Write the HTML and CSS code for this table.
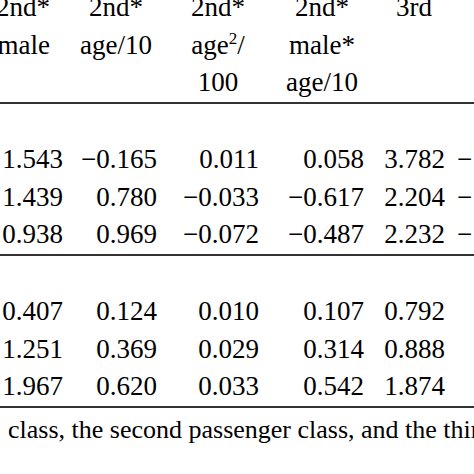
FILE: index.html
```html
<!DOCTYPE html>
<html>
<head>
<meta charset="utf-8">
<link rel="stylesheet" href="styles.css">
</head>
<body>
<div class="page">
<table class="results">
  <colgroup>
    <col class="c1"><col class="c2"><col class="c3"><col class="c4"><col class="c5"><col class="c6">
  </colgroup>
  <thead>
    <tr><th class="h1">2nd*</th><th>2nd*</th><th>2nd*</th><th>2nd*</th><th>3rd</th><th></th></tr>
    <tr><th class="h1">male</th><th>age/10</th><th>age<sup>2</sup>/</th><th>male*</th><th></th><th></th></tr>
    <tr><th class="h1"></th><th></th><th>100</th><th>age/10</th><th></th><th></th></tr>
  </thead>
  <tbody>
    <tr class="gap"><td></td><td></td><td></td><td></td><td></td><td></td></tr>
    <tr><td>1.543</td><td>&minus;0.165</td><td>0.011</td><td>0.058</td><td>3.782</td><td class="cut">&minus;</td></tr>
    <tr><td>1.439</td><td>0.780</td><td>&minus;0.033</td><td>&minus;0.617</td><td>2.204</td><td class="cut">&minus;</td></tr>
    <tr><td>0.938</td><td>0.969</td><td>&minus;0.072</td><td>&minus;0.487</td><td>2.232</td><td class="cut">&minus;</td></tr>
  </tbody>
  <tbody>
    <tr class="gap"><td></td><td></td><td></td><td></td><td></td><td></td></tr>
    <tr><td>0.407</td><td>0.124</td><td>0.010</td><td>0.107</td><td>0.792</td><td class="cut"></td></tr>
    <tr><td>1.251</td><td>0.369</td><td>0.029</td><td>0.314</td><td>0.888</td><td class="cut"></td></tr>
    <tr><td>1.967</td><td>0.620</td><td>0.033</td><td>0.542</td><td>1.874</td><td class="cut"></td></tr>
  </tbody>
</table>
<p class="note">class, the second passenger class, and the third passenger class</p>
</div>
</body>
</html>
```
FILE: styles.css
```css
html, body {
  margin: 0;
  padding: 0;
  background: #fff;
  overflow: hidden;
}
.page {
  width: 474px;
  height: 474px;
  overflow: hidden;
  font-family: "Liberation Serif", Tinos, "Times New Roman", "DejaVu Serif", serif;
  font-size: 27px;
  color: #000;
}
.results {
  border-collapse: collapse;
  table-layout: fixed;
  width: 500px;
  margin: -11px 0 0 -12px;
  border-bottom: 2px solid #333;
  font-family: inherit;
}
.c1 { width: 78px; }
.c2 { width: 100px; }
.c3 { width: 104px; }
.c4 { width: 104px; }
.c5 { width: 80px; }
.c6 { width: 34px; }
.results th,
.results td {
  height: 37.5px;
  padding: 0;
  line-height: 37.5px;
  white-space: nowrap;
  font-weight: normal;
  font-family: inherit;
  vertical-align: top;
}
.results th {
  text-align: center;
}
.results th.h1 {
  text-align: right;
  padding-right: 16px;
}
.results td {
  text-align: right;
}
.results td:nth-child(1) { padding-right: 3px; }
.results td:nth-child(2) { padding-right: 9px; }
.results td:nth-child(3) { padding-right: 11px; }
.results td:nth-child(4) { padding-right: 10px; }
.results td:nth-child(5) { padding-right: 9px; }
.results td.cut {
  text-align: left;
  padding-left: 3px;
}
.results tbody {
  border-top: 2px solid #333;
}
.results sup {
  font-size: 17px;
  line-height: 0;
  vertical-align: 10px;
}
.note {
  margin: 3px 0 0 8px;
  font-size: 26px;
  line-height: 37.5px;
  white-space: nowrap;
}
```
